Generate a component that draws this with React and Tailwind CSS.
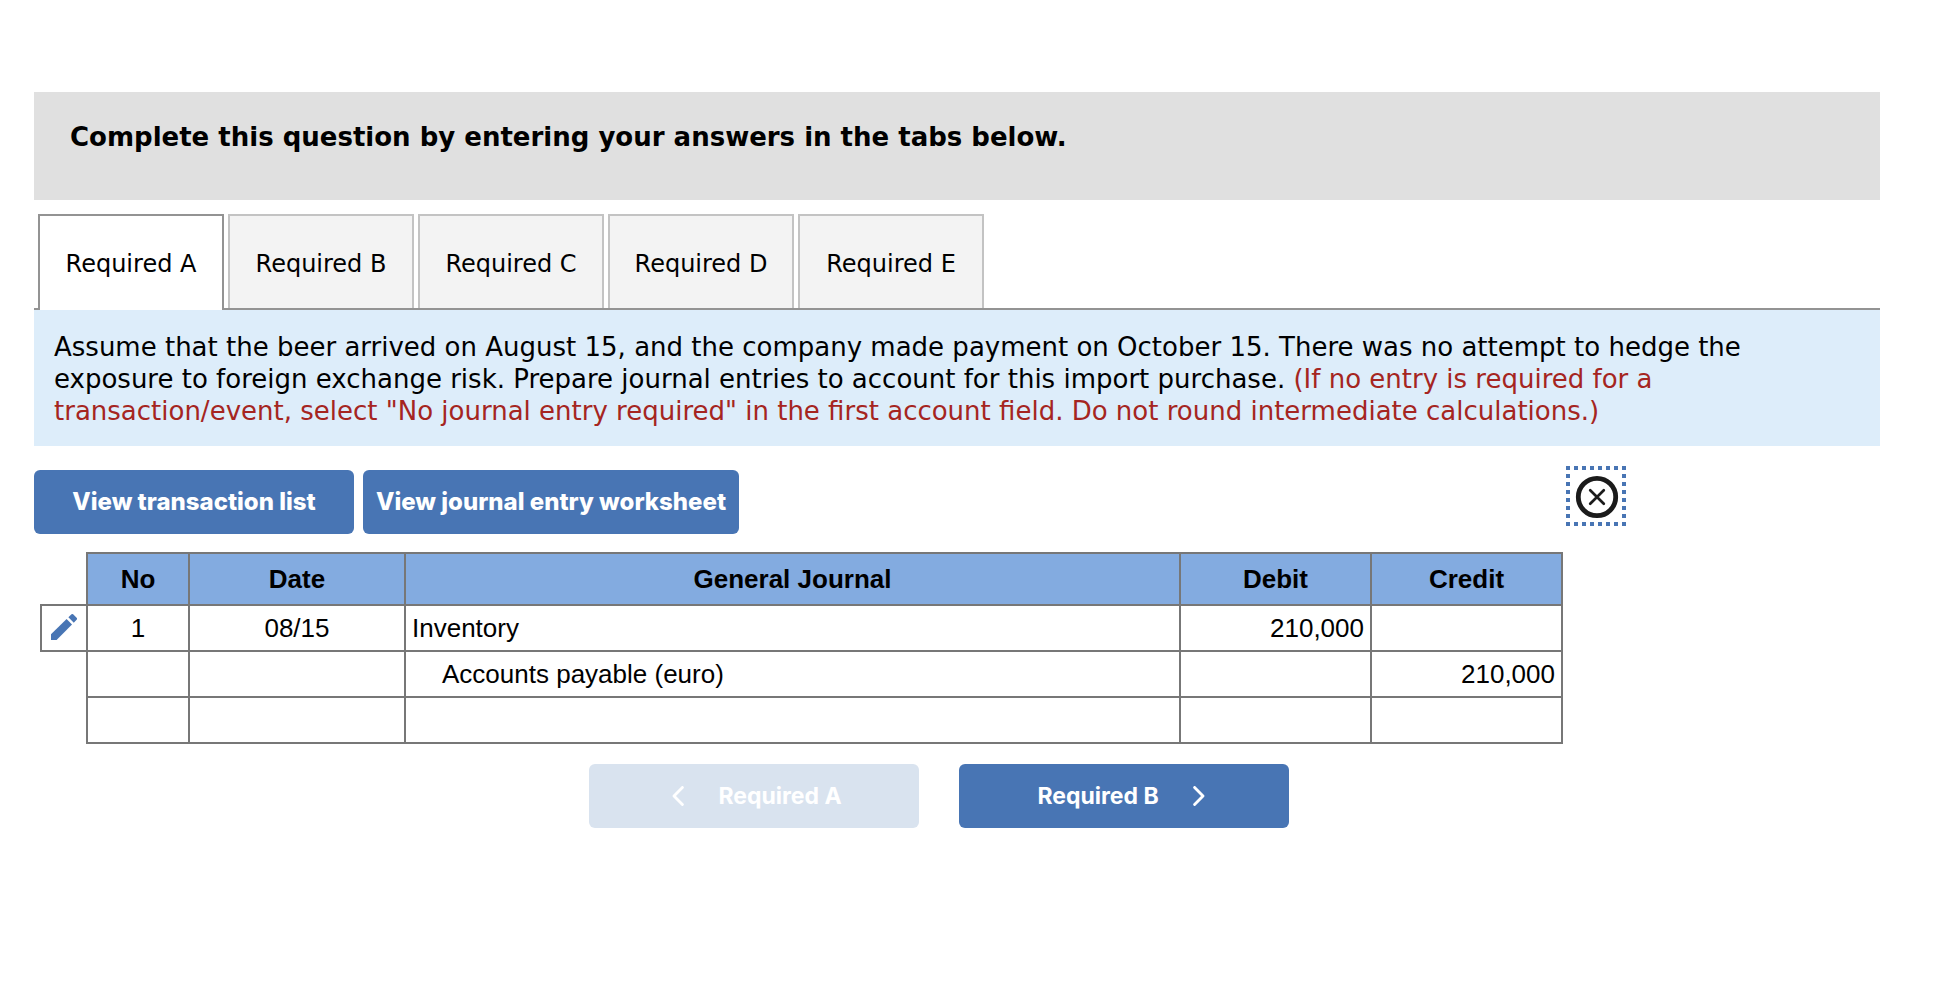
import { useState } from "react";

const tabs = ["Required A", "Required B", "Required C", "Required D", "Required E"];

const rows = [
  { no: "1", date: "08/15", account: "Inventory", debit: "210,000", credit: "", editable: true },
  { no: "", date: "", account: "Accounts payable (euro)", indent: true, debit: "", credit: "210,000" },
  { no: "", date: "", account: "", debit: "", credit: "" },
];

const dots = [0, 8, 16, 24, 32, 40, 48, 56];

function PencilIcon() {
  return (
    <svg viewBox="0 0 26 26" className="size-[26px]" fill="#4875b4" aria-hidden="true">
      <path d="M0 20.2 15.6 5 21 10.6 5.6 26H0Z" />
      <path d="M17.4 3.3 20.2.5a1.6 1.6 0 0 1 2.2 0l3.2 3.2a1.4 1.4 0 0 1 0 2L22.8 8.7Z" />
    </svg>
  );
}

function CloseIcon() {
  return (
    <svg viewBox="0 0 60 60" className="size-[60px]" aria-hidden="true">
      <g fill="#4875b4" shapeRendering="crispEdges">
        {dots.map((d) => (
          <g key={d}>
            <rect x={d} y="0" width="4" height="4" />
            <rect x={d} y="56" width="4" height="4" />
            <rect x="0" y={d} width="4" height="4" />
            <rect x="56" y={d} width="4" height="4" />
          </g>
        ))}
      </g>
      <g fill="none" stroke="#1b1b1b" strokeLinecap="round">
        <circle cx="31" cy="31" r="18.7" strokeWidth="4.8" />
        <path d="m24.2 24.2 13.6 13.6M37.8 24.2 24.2 37.8" strokeWidth="2.7" />
      </g>
    </svg>
  );
}

function Chevron({ d }) {
  return (
    <svg viewBox="0 0 12 20" className="h-5 w-3" fill="none" stroke="#fff" strokeWidth="2.8" strokeLinecap="round" strokeLinejoin="round" aria-hidden="true">
      <path d={d} />
    </svg>
  );
}

const cell = "h-[46px] border-2 border-[#777] p-0";

export default function App() {
  const [active, setActive] = useState(0);

  return (
    <main className="bg-white pt-[92px] pr-16 pb-12 pl-[34px] text-black">
      <h1 className="bg-[#e0e0e0] px-9 pt-[29px] pb-[47px] font-['DejaVu_Sans',Verdana,sans-serif] text-[26px] leading-8 font-bold">
        Complete this question by entering your answers in the tabs below.
      </h1>

      <div role="tablist" className="mt-3.5 flex gap-1 border-b-2 border-[#939393] pl-1 font-['DejaVu_Sans',Verdana,sans-serif]">
        {tabs.map((label, i) => (
          <button
            key={label}
            type="button"
            role="tab"
            aria-selected={i === active}
            onClick={() => setActive(i)}
            className={
              i === active
                ? "-mb-0.5 h-24 w-[186px] border-2 border-b-0 border-[#939393] bg-white pt-0.5 text-2xl"
                : "h-[94px] w-[186px] border-2 border-b-0 border-[#c3c3c3] bg-[#f3f3f3] pt-1 text-2xl"
            }
          >
            {label}
          </button>
        ))}
      </div>

      <p className="bg-[#ddedfa] px-5 pt-[21px] pb-[19px] font-['DejaVu_Sans',Verdana,sans-serif] text-[26px] leading-8">
        Assume that the beer arrived on August 15, and the company made payment on October 15. There was no attempt to hedge the exposure to foreign exchange risk. Prepare journal entries to account for this import purchase.{" "}
        <span className="text-[#a52521]">
          (If no entry is required for a transaction/event, select "No journal entry required" in the first account field. Do not round intermediate calculations.)
        </span>
      </p>

      <div className="mt-5 flex w-full max-w-[1592px] items-start gap-[9px] font-['Inter',sans-serif] text-2xl font-extrabold text-white">
        <button type="button" className="mt-1 h-16 w-80 rounded-md bg-[#4875b4]">View transaction list</button>
        <button type="button" className="mt-1 h-16 w-[376px] rounded-md bg-[#4875b4] whitespace-nowrap">View journal entry worksheet</button>
        <button type="button" aria-label="Close" className="ml-auto">
          <CloseIcon />
        </button>
      </div>

      <div className="mt-[18px] w-full max-w-[1529px] pl-1.5">
        <table className="w-full table-fixed border-collapse font-['Liberation_Sans',Arial,sans-serif] text-[26px] leading-8">
          <colgroup>
            <col className="w-[46px]" />
            <col className="w-[102px]" />
            <col className="w-[216px]" />
            <col />
            <col className="w-[191px]" />
            <col className="w-[191px]" />
          </colgroup>
          <thead>
            <tr>
              <td className="h-[52px] p-0" />
              {["No", "Date", "General Journal", "Debit", "Credit"].map((h) => (
                <th key={h} scope="col" className="border-2 border-[#777] bg-[#83abe0] p-0 font-bold">{h}</th>
              ))}
            </tr>
          </thead>
          <tbody>
            {rows.map((r, i) => (
              <tr key={i}>
                {r.editable ? (
                  <td className={cell}>
                    <button type="button" aria-label="Edit entry 1" className="flex w-full justify-center pb-0.5">
                      <PencilIcon />
                    </button>
                  </td>
                ) : (
                  <td className="h-[46px] p-0" />
                )}
                <td className={`${cell} text-center`}>{r.no}</td>
                <td className={`${cell} text-center`}>{r.date}</td>
                <td className={cell}>
                  <div className={r.indent ? "pl-9" : "pl-1.5"}>{r.account}</div>
                </td>
                <td className={cell}><div className="pr-1.5 text-right">{r.debit}</div></td>
                <td className={cell}><div className="pr-1.5 text-right">{r.credit}</div></td>
              </tr>
            ))}
          </tbody>
        </table>
      </div>

      <nav className="mt-5 flex justify-center gap-10 pr-9 font-['Inter',sans-serif] text-[23px] font-bold text-white">
        <button type="button" disabled className="flex h-16 w-[330px] items-center justify-center gap-[34px] rounded-md bg-[#d9e3ef] pl-1.5">
          <Chevron d="M10.4 1.4 2 10l8.4 8.6" />
          Required A
        </button>
        <button type="button" className="flex h-16 w-[330px] items-center justify-center gap-[34px] rounded-md bg-[#4875b4] pr-1.5">
          Required B
          <Chevron d="M1.6 1.4 10 10l-8.400 8.600" />
        </button>
      </nav>
    </main>
  );
}
